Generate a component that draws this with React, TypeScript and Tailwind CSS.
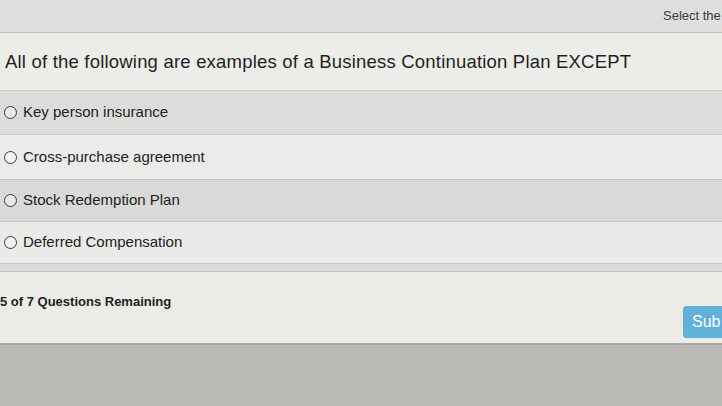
import React from 'react'

const options = [
  { label: 'Key person insurance', band: 'bg-[#dcdcda]', h: 'h-[44px]' },
  { label: 'Cross-purchase agreement', band: 'bg-[#ebebe9]', h: 'h-[45px]' },
  { label: 'Stock Redemption Plan', band: 'bg-[#d9d9d7]', h: 'h-[42px]' },
  { label: 'Deferred Compensation', band: 'bg-[#eaeae8]', h: 'h-[42px]' },
]

function Radio() {
  return <span className="inline-block w-[13px] h-[13px] rounded-full border-[1.5px] border-[#3a3a3a] bg-white/40 shrink-0" />
}

export default function App() {
  return (
    <div className="w-[722px] h-[406px] overflow-hidden bg-[#b9b9b5] text-[#1f1f1f]" style={{ fontFamily: '"Liberation Sans", Arial, sans-serif' }}>
      {/* top strip */}
      <div className="h-[33px] bg-[#dededc] flex items-center border-b border-[#c4c4c2] overflow-hidden">
        <span className="text-[13px] text-[#3a3a3a] whitespace-nowrap pl-[663px]">Select the</span>
      </div>

      {/* question */}
      <div className="h-[58px] bg-[#ecece9] flex items-center px-[5px] border-b border-[#c9c9c7]">
        <h1 className="text-[18.5px] tracking-[0.2px] whitespace-nowrap">
          All of the following are examples of a Business Continuation Plan EXCEPT
        </h1>
      </div>

      {/* answers */}
      {options.map((o) => (
        <div key={o.label} className={`${o.band} ${o.h} flex items-center gap-[6px] pl-[4px] border-b border-[#c6c6c4]`}>
          <Radio />
          <span className="text-[15px] text-[#222] whitespace-nowrap">{o.label}</span>
        </div>
      ))}

      <div className="h-[8px] bg-[#dadad8] border-b border-[#c2c2c0]" />

      {/* footer */}
      <div className="h-[73px] bg-[#ecebe8] flex items-start justify-between border-b-2 border-[#a9a9a5]">
        <span className="text-[13px] font-bold mt-[20px] whitespace-nowrap">5 of 7 Questions Remaining</span>
        <button className="mt-[34px] w-[39px] h-[32px] bg-[#62b1d9] text-white text-[16px] rounded-l-[3px] pl-[9px] text-left overflow-hidden whitespace-nowrap">
          Sub
        </button>
      </div>
    </div>
  )
}
